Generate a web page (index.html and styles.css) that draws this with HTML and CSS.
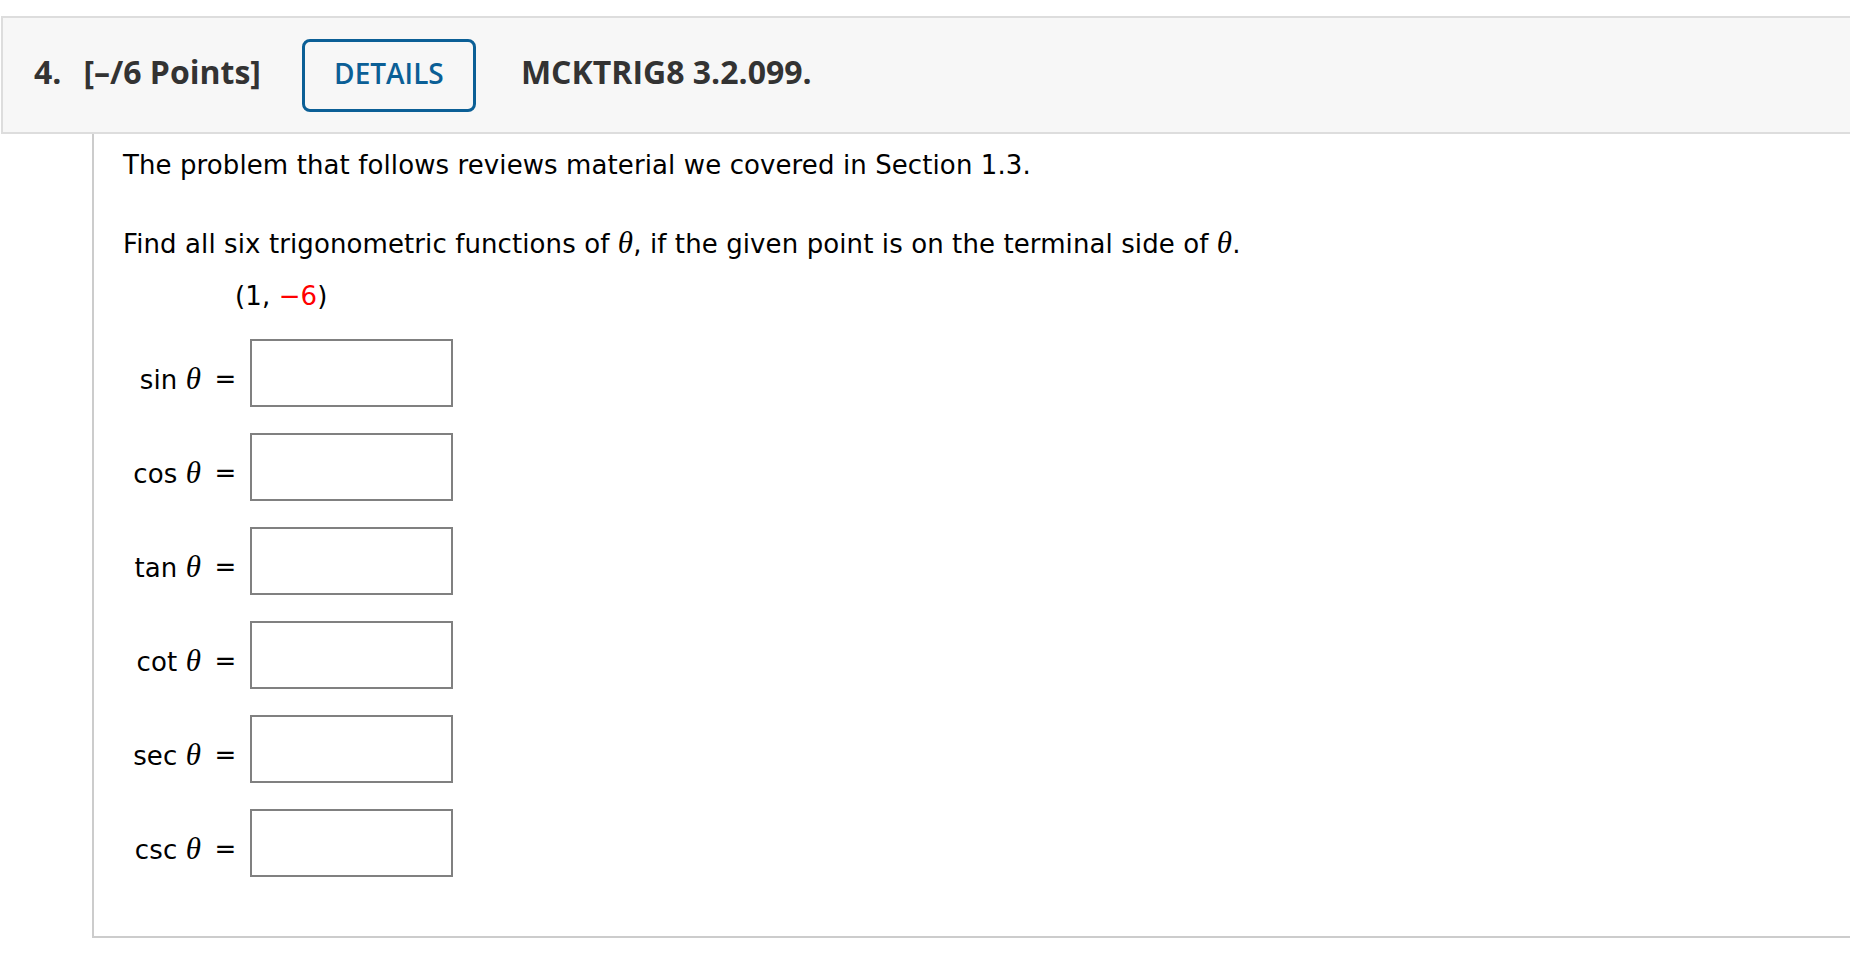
FILE: index.html
```html
<!DOCTYPE html>
<html lang="en">
<head>
<meta charset="UTF-8">
<meta name="viewport" content="width=device-width, initial-scale=1.0">
<title>MCKTRIG8 3.2.099</title>
<link rel="stylesheet" href="styles.css">
</head>
<body>

<div class="question">
  <div class="q-head">
    <span class="q-num">4.</span>
    <span class="q-pts">[&ndash;/6 Points]</span>
    <button class="details-btn">DETAILS</button>
    <span class="q-code">MCKTRIG8 3.2.099.</span>
  </div>

  <div class="q-body">
    <p class="intro">The problem that follows reviews material we covered in Section 1.3.</p>
    <p class="prompt">Find all six trigonometric functions of <i class="theta">&theta;</i>, if the given point is on the terminal side of <i class="theta">&theta;</i>.</p>
    <div class="point">(1, <span class="neg">&minus;6</span>)</div>

    <div class="answers">
      <label class="fn">sin <i class="theta">&theta;</i></label><span class="eq">=</span><input class="ans" type="text">
      <label class="fn">cos <i class="theta">&theta;</i></label><span class="eq">=</span><input class="ans" type="text">
      <label class="fn">tan <i class="theta">&theta;</i></label><span class="eq">=</span><input class="ans" type="text">
      <label class="fn">cot <i class="theta">&theta;</i></label><span class="eq">=</span><input class="ans" type="text">
      <label class="fn">sec <i class="theta">&theta;</i></label><span class="eq">=</span><input class="ans" type="text">
      <label class="fn">csc <i class="theta">&theta;</i></label><span class="eq">=</span><input class="ans" type="text">
    </div>
  </div>
</div>

</body>
</html>
```

FILE: styles.css
```css
body {
  margin: 0;
  padding: 16px 0 0 1px;
  font-family: 'DejaVu Sans', Verdana, sans-serif;
  background: #fff;
  color: #000;
  overflow: hidden;
}
.q-head {
  display: flex;
  align-items: center;
  height: 114px;
  padding-left: 31px;
  background: #f7f7f7;
  border: 2px solid #ddd;
  border-right: none;
  font-family: 'Open Sans', sans-serif;
  font-weight: 700;
  font-size: 32px;
  color: #333;
}
.q-head span {
  margin-bottom: 8px;
}
.q-num {
  margin-right: 22px;
}
.q-pts {
  margin-right: 41px;
}
.details-btn {
  width: 174px;
  height: 73px;
  margin-right: 45px;
  padding: 0 0 4px;
  background: transparent;
  border: 3px solid #0b5f96;
  border-radius: 8px;
  font-family: 'Open Sans', sans-serif;
  font-weight: 600;
  font-size: 28px;
  color: #0b5f96;
  cursor: pointer;
}
.q-body {
  margin-left: 91px;
  padding: 14px 0 59px 29px;
  border-left: 2px solid #ccc;
  border-bottom: 2px solid #ccc;
  font-size: 26px;
  line-height: 34px;
  letter-spacing: 0.1px;
}
.q-body p {
  margin: 0;
}
.prompt {
  margin-top: 44px !important;
}
.theta {
  font-family: 'Liberation Serif', serif;
  font-size: 31px;
}
.point {
  margin: 18px 0 26px 112px;
}
.neg {
  color: #f00;
}
.answers {
  display: grid;
  grid-template-columns: 78px 49px 203px;
  grid-auto-rows: 68px;
  row-gap: 26px;
  align-items: center;
}
.fn {
  text-align: right;
  padding-top: 12px;
  white-space: nowrap;
}
.eq {
  text-align: center;
  padding-top: 12px;
}
.ans {
  box-sizing: border-box;
  width: 203px;
  height: 68px;
  margin: 0;
  border: 2px solid #808080;
  border-radius: 0;
  background: #fff;
  font-size: 26px;
}
```
